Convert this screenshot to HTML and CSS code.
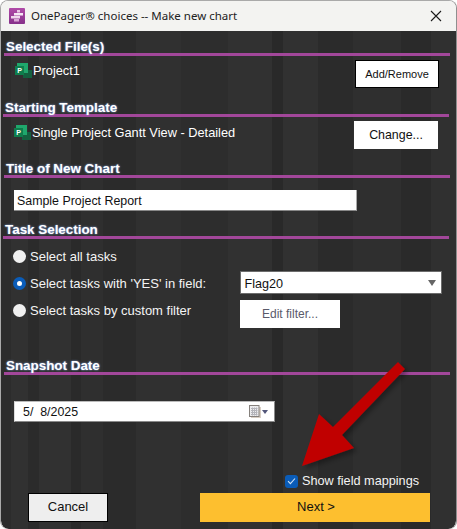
FILE: index.html
```html
<!DOCTYPE html>
<html lang="en">
<head>
<meta charset="utf-8">
<title>OnePager choices</title>
<link rel="stylesheet" href="styles.css">
</head>
<body>
<div class="window">
  <header class="titlebar">
    <svg class="app-icon" width="16" height="16" viewBox="0 0 16 16">
      <defs><linearGradient id="app-fill" x1="0" y1="0" x2="0" y2="1"><stop offset="0" stop-color="#b04aa8"/><stop offset="1" stop-color="#86308a"/></linearGradient></defs>
      <rect width="16" height="16" rx="1" fill="url(#app-fill)"/>
      <rect x="8" y="2" width="3" height="2.500" fill="#e9c6e5"/>
      <rect x="5" y="5" width="9" height="2.500" fill="#f6e6f4"/>
      <rect x="2" y="8" width="9" height="2.500" fill="#efd6ec"/>
      <rect x="5" y="11" width="5" height="2.500" fill="#d9a6d5"/>
    </svg>
    <span class="window-title">OnePager® choices -- Make new chart</span>
    <svg class="close" width="12" height="12" viewBox="0 0 12 12"><path d="M1 1l10 10M11 1L1 11" stroke="#1a1a1a" stroke-width="1.100" fill="none"/></svg>
  </header>
  <main class="content">
    <section class="sec sec-files">
      <h2 class="heading">Selected File(s)</h2>
      <div class="row row-files">
        <span class="file">
          <svg class="p-icon" width="17" height="15" viewBox="0 0 17 15"><rect x="8" y="7" width="9" height="8" fill="#14603f"/><rect x="2" y="0" width="11" height="10" fill="#1fa76c"/><rect x="0" y="3" width="9" height="9" fill="#0f7d4c"/><text x="2.300" y="10" class="p-letter">P</text></svg>
          Project1
        </span>
        <button class="btn btn-add">Add/Remove</button>
      </div>
    </section>
    <section class="sec sec-template">
      <h2 class="heading heading-alt">Starting Template</h2>
      <div class="row row-template">
        <span class="file">
          <svg class="p-icon" width="17" height="15" viewBox="0 0 17 15"><rect x="8" y="7" width="9" height="8" fill="#14603f"/><rect x="2" y="0" width="11" height="10" fill="#1fa76c"/><rect x="0" y="3" width="9" height="9" fill="#0f7d4c"/><text x="2.300" y="10" class="p-letter">P</text></svg>
          Single Project Gantt View - Detailed
        </span>
        <button class="btn btn-change">Change...</button>
      </div>
    </section>
    <section class="sec sec-title">
      <h2 class="heading">Title of New Chart</h2>
      <div class="title-input">Sample Project Report</div>
    </section>
    <section class="sec sec-tasks">
      <h2 class="heading heading-alt">Task Selection</h2>
      <div class="task-grid">
        <div class="radios">
          <label class="radio-row"><span class="radio"></span>Select all tasks</label>
          <label class="radio-row"><span class="radio radio-on"></span>Select tasks with 'YES' in field:</label>
          <label class="radio-row"><span class="radio"></span>Select tasks by custom filter</label>
        </div>
        <div class="task-controls">
          <div class="select"><span class="select-value">Flag20</span><span class="caret"></span></div>
          <button class="btn btn-edit">Edit filter...</button>
        </div>
      </div>
    </section>
    <section class="sec sec-date">
      <h2 class="heading">Snapshot Date</h2>
      <div class="date">
        <span class="date-value">5/&nbsp;&nbsp;8/2025</span>
        <svg class="cal" width="12" height="13" viewBox="0 0 12 13"><rect x="2" y="2" width="10" height="11" fill="#d9cfc4"/><rect x="0.500" y="0.500" width="9.500" height="11" fill="#ececee" stroke="#85807c"/><path d="M2 3.500h6.500M2 5.500h6.500M2 7.500h6.500M2 9.500h6.500M3.500 2.500v8M5.500 2.500v8M7.500 2.500v8" stroke="#b4b4ba" fill="none"/></svg>
        <span class="date-caret"></span>
      </div>
    </section>
    <label class="mappings"><span class="check"><svg width="9" height="8" viewBox="0 0 9 8"><path d="M1 4.200l2.400 2.400L8 1.500" stroke="#cfe2f7" stroke-width="1.100" fill="none"/></svg></span>Show field mappings</label>
    <footer class="footer">
      <button class="btn btn-cancel">Cancel</button>
      <button class="btn btn-next">Next &gt;</button>
    </footer>
  </main>
  <svg class="arrow" width="457" height="529" viewBox="0 0 457 529">
    <defs><filter id="arrow-shadow" x="-20%" y="-20%" width="140%" height="140%"><feDropShadow dx="3" dy="3" stdDeviation="2.500" flood-color="#000" flood-opacity=".35"/></filter></defs>
    <polygon points="398,362 405,369 342,435 354,448 302,466 319,414 333,427" fill="#c00000" filter="url(#arrow-shadow)"/>
  </svg>
</div>
</body>
</html>
```
FILE: styles.css
```css
* { box-sizing: border-box; }
html, body { margin: 0; padding: 0; background: #fff; }
body { width: 457px; height: 529px; overflow: hidden; font-family: "Liberation Sans", Arial, sans-serif; }
.window {
  position: relative; width: 457px; height: 529px; display: flex; flex-direction: column;
  border-radius: 8px; overflow: hidden; border: 1px solid #a9a9a9; border-bottom: 0; border-right-color: #8f8f8f;
}
.titlebar {
  height: 30px; flex: none; background: #f3f3f1; display: flex; align-items: center; padding: 0 14px 0 8px;
}
.app-icon { flex: none; }
.window-title { margin-left: 6px; padding-bottom: 1px; font: 11.500px "Noto Sans", sans-serif; color: #222; flex: 1; }
.close { flex: none; }
.content {
  flex: 1; display: flex; flex-direction: column; color: #fff; font-size: 13px;
  background-color: #2d2d2d;
  background-image: linear-gradient(90deg,
    #2c2c2c 0 10px, #313131 10px 27px, #2b2b2b 27px 38px, #313131 38px 70px, #2a2a2a 70px 80px, #2f2f2f 80px 102px,
    #2b2b2b 102px 135px, #303030 135px 180px, #2d2d2d 180px 227px, #313131 227px 271px, #292929 271px 282px,
    #313131 282px 317px, #2b2b2b 317px 352px, #2f2f2f 352px 400px, #2a2a2a 400px 430px, #303030 430px 457px);
  border-radius: 0 0 8px 8px;
}
.heading {
  margin: 0 6px 0 3px; padding: 2px 0 0 2px; height: 18px; font-size: 13.400px; line-height: 13px; font-weight: 700;
  color: #fff; border-bottom: 3px solid #a2479a; text-shadow: 0 0 2px #8fb5ff; white-space: nowrap;
}
.heading-alt { margin: 0 7px 0 2px; }
.sec { flex: none; }
.sec-files { height: 68px; padding-top: 7px; }
.sec-template { height: 61px; }
.sec-title { height: 61px; }
.sec-tasks { height: 136px; }
.sec-date { height: 117px; }
.row { display: flex; justify-content: space-between; align-items: flex-start; }
.row-files { margin-top: 4px; padding: 0 17px 0 14px; }
.row-template { margin-top: 4px; padding: 0 18px 0 13px; }
.file { display: flex; align-items: center; gap: 1px; font-size: 12.800px; height: 20px; }
.row-template .file { padding-top: 2px; }
.p-icon { flex: none; }
.p-letter { font: 700 7px "Liberation Sans", sans-serif; fill: #fff; }
.btn { display: block; padding: 0; font: 11px "Liberation Sans", Arial, sans-serif; color: #111; background: #fff; border: 0; height: 28px; }
.btn-add { width: 84px; border: 1px solid #000; }
.btn-change { width: 84px; font-size: 12.400px; }
.title-input {
  margin: 12px 0 0 13px; width: 343px; height: 21px; background: #fff; color: #111; font: 12.400px/23px "Liberation Sans", sans-serif;
  padding-left: 3px; border-bottom: 1px solid #888; border-right: 1px solid #aaa;
}
.task-grid { display: flex; margin-top: 4px; padding-left: 12px; }
.radios { width: 227px; display: flex; flex-direction: column; gap: 7px; padding-top: 3px; }
.radio-row { display: flex; align-items: center; height: 20px; font-size: 13px; white-space: nowrap; color: #f4f4f4; }
.radio { width: 13px; height: 13px; border-radius: 50%; background: #f0f0f0; margin-right: 4px; flex: none; }
.radio-on { background: #fff; border: 4px solid #0a5cb8; }
.task-controls { padding-top: 28px; display: flex; flex-direction: column; gap: 6px; align-items: flex-start; color: #111; }
.select {
  width: 202px; height: 23px; background: #fff; border: 1px solid #6c6c6c; font-size: 12.600px; padding: 0 5px 0 3.500px; display: flex; justify-content: space-between; align-items: center;
}
.select-value { padding-top: 2px; }
.caret { width: 0; height: 0; border: 4px solid transparent; border-top: 6px solid #666; border-bottom: 0; }
.btn-edit { width: 100px; font-size: 12px; color: #5a5a6a; }
.date {
  margin: 26px 0 0 13px; width: 261px; height: 21px; background: #fff; border: 1px solid #8a8a8a; border-top-color: #bbb; border-left-color: #ddd; color: #111;
  display: flex; align-items: center; padding: 0 6px 0 8px; font-size: 12.400px;
}
.date-value { flex: 1; }
.cal { flex: none; margin-right: 1px; }
.date-caret { width: 0; height: 0; border: 3.500px solid transparent; border-top: 4px solid #52567a; border-bottom: 0; }
.mappings { display: flex; align-items: center; height: 14px; margin: 0 0 0 284px; font-size: 12.700px; color: #f4f4f4; white-space: nowrap; }
.check { width: 13px; height: 13px; border-radius: 3px; background: #0a5cb8; margin-right: 4px; display: flex; align-items: center; justify-content: center; flex: none; }
.footer { display: flex; margin: 5px 0 0 27px; }
.btn-cancel { width: 80px; height: 29px; padding-bottom: 2px; background: #eee; border: 1px solid #000; font-size: 13px; }
.btn-next { width: 230px; height: 29px; padding: 0 0 2px 2px; margin-left: 92px; background: #fdbf2f; font-size: 13px; }
.arrow { position: absolute; left: -1px; top: -1px; pointer-events: none; }
```
